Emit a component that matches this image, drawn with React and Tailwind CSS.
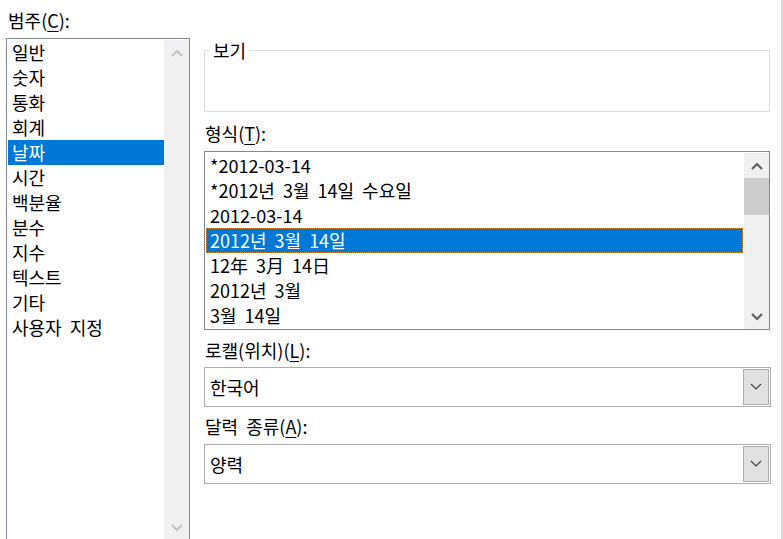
import React from "react";

const CATEGORIES = ["일반", "숫자", "통화", "회계", "날짜", "시간", "백분율", "분수", "지수", "텍스트", "기타", "사용자 지정"];
const FORMATS = ["*2012-03-14", "*2012년 3월 14일 수요일", "2012-03-14", "2012년 3월 14일", "12年 3月 14日", "2012년 3월", "3월 14일"];

function Chevron({ up, color, thin }) {
  return (
    <svg width="12" height="8" viewBox="0 0 12 8" className="block">
      <polyline
        points={up ? "1,7 6,2 11,7" : "1,1 6,6 11,1"}
        fill="none"
        stroke={color}
        strokeWidth={thin ? 1.2 : 2.2}
      />
    </svg>
  );
}

function Scrollbar({ disabled, thumb }) {
  const c = disabled ? "#c2c2c2" : "#606060";
  return (
    <div className="w-[25px] shrink-0 bg-[#f0f0f0] flex flex-col">
      <div className="h-[25px] flex items-center justify-center"><Chevron up color={c} /></div>
      {thumb && <div className="h-[37px] bg-[#cdcdcd]" />}
      <div className="flex-1" />
      <div className="h-[25px] flex items-center justify-center"><Chevron color={c} /></div>
    </div>
  );
}

function Label({ text, acc }) {
  return (
    <div className="h-[25px] leading-[25px] text-[18px] text-black whitespace-nowrap">
      {text}(<span className="underline underline-offset-[3px] decoration-1">{acc}</span>):
    </div>
  );
}

function Combo({ value }) {
  return (
    <div className="h-[40px] w-[567px] border border-[#adadad] flex items-center pl-[5px] pr-[1px]">
      <span className="flex-1 text-[18px] leading-[25px]">{value}</span>
      <div className="w-[26px] h-[36px] bg-[#e1e1e1] border border-[#adadad] flex items-center justify-center">
        <Chevron color="#404040" thin />
      </div>
    </div>
  );
}

export default function App() {
  return (
    <div className="w-[783px] h-[539px] overflow-hidden bg-white font-['Noto_Sans_CJK_KR',sans-serif] text-black [word-spacing:4px]">
      <div className="w-[783px] h-[539px] border-r-2 border-[#dadada] flex">
        {/* category list */}
        <div className="w-[190px] pl-[6px] pt-[8px] shrink-0">
          <div className="pl-[2px]">
            <Label text="범주" acc="C" />
          </div>
          <div className="mt-[5px] h-[503px] border border-[#828790] flex">
            <div className="flex-1 pt-[1px] pl-[1px]">
              {CATEGORIES.map((c, i) => (
                <div key={c}
                  className={`h-[25px] leading-[25px] pl-[4px] text-[18px] whitespace-nowrap ${i === 4 ? "bg-[#0078d7] text-white" : ""}`}>
                  {c}
                </div>
              ))}
            </div>
            <div className="pt-[1px] flex"><Scrollbar disabled /></div>
          </div>
        </div>

        {/* right side */}
        <div className="ml-[14px] w-[567px] pt-[41px]">
          <fieldset className="border border-[#dcdcdc] w-[566px] h-[71px] m-0 p-0">
            <legend className="ml-[5px] px-[3px] text-[18px] leading-[18px]">보기</legend>
          </fieldset>

          <div className="mt-[9px] pl-[1px]">
            <Label text="형식" acc="T" />
          </div>
          <div className="mt-[5px] w-[566px] h-[179px] border border-[#828790] flex">
            <div className="flex-1 pt-[1px] pl-[1px] pr-[1px]">
              {FORMATS.map((f, i) => (
                <div key={f}
                  className={`h-[25px] leading-[23px] pl-[3px] text-[18px] whitespace-nowrap border ${i === 3 ? "bg-[#0078d7] text-white border-dotted border-[#e8902e]" : "border-transparent"}`}>
                  {f}
                </div>
              ))}
            </div>
            <div className="pt-[1px] flex"><Scrollbar thumb /></div>
          </div>

          <div className="mt-[8px] pl-[1px]">
            <Label text="로캘(위치)" acc="L" />
          </div>
          <div className="mt-[4px]"><Combo value="한국어" /></div>

          <div className="mt-[7px] pl-[1px]">
            <Label text="달력 종류" acc="A" />
          </div>
          <div className="mt-[5px]"><Combo value="양력" /></div>
        </div>
      </div>
    </div>
  );
}
